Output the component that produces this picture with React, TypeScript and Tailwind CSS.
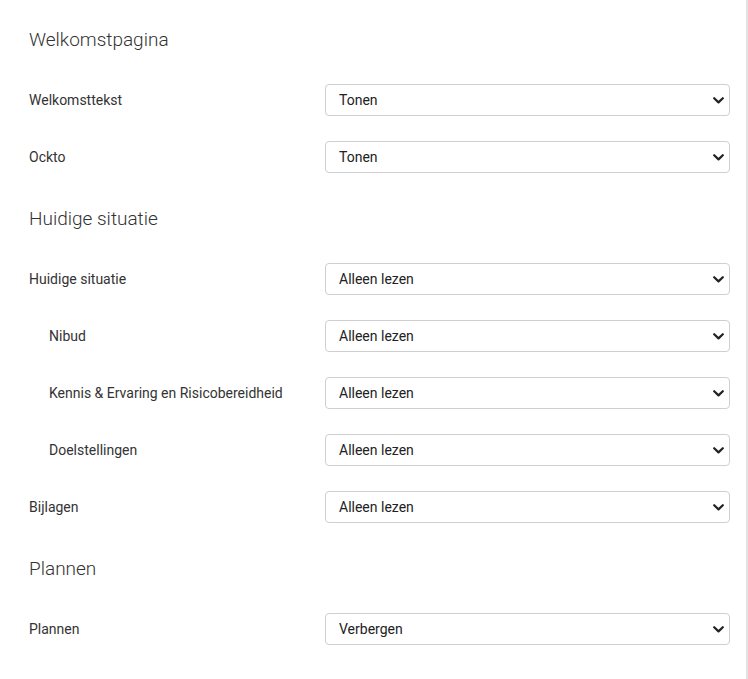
import * as React from "react";

type Row = {
  label: string;
  value: string;
  indent?: boolean;
};

type Section = {
  title: string;
  rows: Row[];
};

const sections: Section[] = [
  {
    title: "Welkomstpagina",
    rows: [
      { label: "Welkomsttekst", value: "Tonen" },
      { label: "Ockto", value: "Tonen" },
    ],
  },
  {
    title: "Huidige situatie",
    rows: [
      { label: "Huidige situatie", value: "Alleen lezen" },
      { label: "Nibud", value: "Alleen lezen", indent: true },
      { label: "Kennis & Ervaring en Risicobereidheid", value: "Alleen lezen", indent: true },
      { label: "Doelstellingen", value: "Alleen lezen", indent: true },
      { label: "Bijlagen", value: "Alleen lezen" },
    ],
  },
  {
    title: "Plannen",
    rows: [{ label: "Plannen", value: "Verbergen" }],
  },
];

function Chevron() {
  return (
    <svg width="11" height="7" viewBox="0 0 11 7" fill="none" className="shrink-0">
      <path d="M1.2 1.2 L5.5 5.4 L9.8 1.2" stroke="#222" strokeWidth="2.2" strokeLinecap="round" strokeLinejoin="round" />
    </svg>
  );
}

function FakeSelect({ value }: { value: string }) {
  return (
    <div className="flex h-[32px] w-[405px] items-center justify-between rounded-[4px] border border-[#cfcfcf] bg-white pl-[13px] pr-[5px] text-[14px] text-[#222]">
      <span>{value}</span>
      <Chevron />
    </div>
  );
}

export default function App() {
  return (
    <div className="flex min-h-[679px] w-[748px] bg-white font-['Roboto',sans-serif] text-[#333]">
      <div className="flex flex-1 flex-col pl-[29px] pt-[7px]">
        {sections.map((section) => (
          <div key={section.title} className="flex flex-col">
            <div className="flex h-[65px] items-center pt-[2px] text-[19px] font-light text-[#333]">
              {section.title}
            </div>
            {section.rows.map((row) => (
              <div key={row.label} className="flex h-[57px] items-center pb-[1px]">
                <div className={`w-[296px] text-[14px] ${row.indent ? "pl-[20px]" : ""}`}>{row.label}</div>
                <FakeSelect value={row.value} />
              </div>
            ))}
          </div>
        ))}
      </div>
      <div className="w-[2px] bg-[#e2e2e2]" />
    </div>
  );
}
